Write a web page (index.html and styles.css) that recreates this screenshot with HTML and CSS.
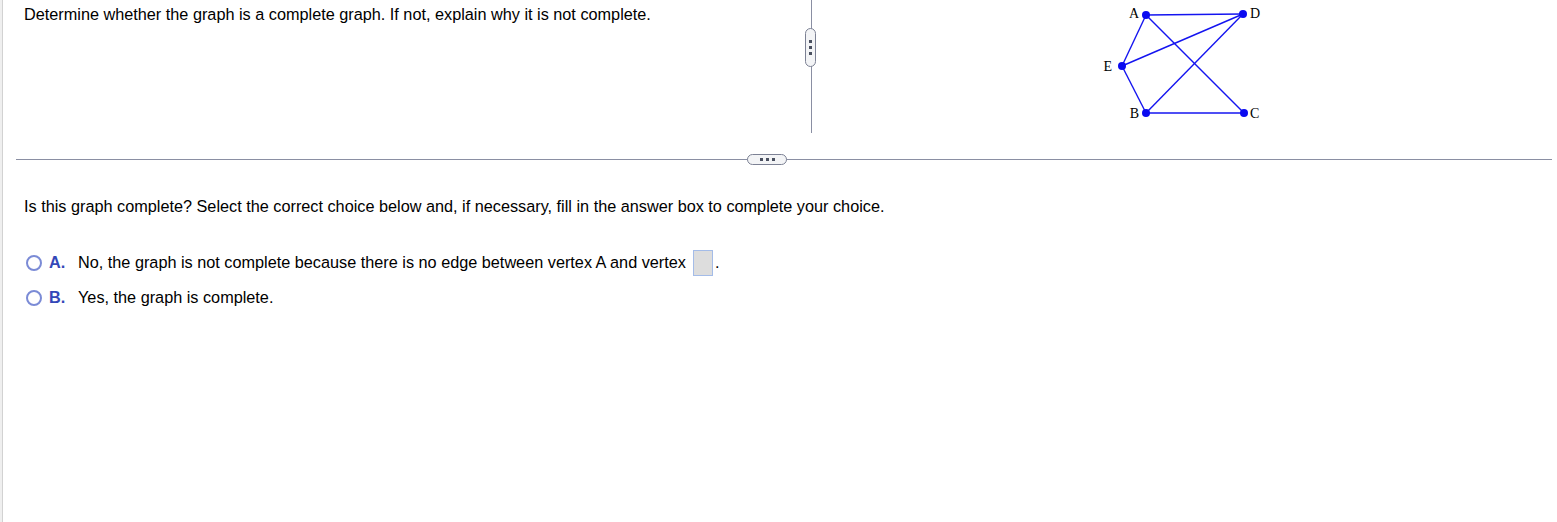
FILE: index.html
```html
<!DOCTYPE html>
<html lang="en">
  <head>
    <meta charset="UTF-8" />
    <title>Complete graph question</title>
    <link rel="stylesheet" href="styles.css">
  </head>
  <body>
    <div class="page">
      <div class="edge"></div>
      <div class="main">
        <div class="top">
          <div class="question">
            Determine whether the graph is a complete graph. If not, explain why it is not complete.
          </div>
          <div class="vsplit">
            <div class="vhandle"><span></span><span></span><span></span></div>
          </div>
          <div class="figure">
            <svg class="graph" width="170" height="125" viewBox="0 0 170 125">
              <g stroke="#1414f0" stroke-width="1.4">
                <line x1="46" y1="15" x2="143" y2="14" />
                <line x1="46" y1="15" x2="22" y2="66" />
                <line x1="46" y1="15" x2="144" y2="113" />
                <line x1="22" y1="66" x2="143" y2="14" />
                <line x1="22" y1="66" x2="46" y2="113" />
                <line x1="46" y1="113" x2="143" y2="14" />
                <line x1="46" y1="113" x2="144" y2="113" />
              </g>
              <g fill="#0a0af0">
                <circle cx="46" cy="15" r="4" />
                <circle cx="143" cy="14" r="4" />
                <circle cx="22" cy="66" r="4" />
                <circle cx="46" cy="113" r="4" />
                <circle cx="144" cy="113" r="4" />
              </g>
              <g class="labels">
                <text x="39" y="18" text-anchor="end">A</text>
                <text x="150" y="18">D</text>
                <text x="12" y="71" text-anchor="end">E</text>
                <text x="39" y="118" text-anchor="end">B</text>
                <text x="150" y="118">C</text>
              </g>
            </svg>
          </div>
        </div>

        <div class="hsplit">
          <div class="hhandle"><span></span><span></span><span></span></div>
        </div>

        <div class="answer">
          <p class="prompt">Is this graph complete? Select the correct choice below and, if necessary, fill in the answer box to complete your choice.</p>
          <div class="choice">
            <span class="radio"></span>
            <span class="letter">A.</span>
            <span class="choice-text">No, the graph is not complete because there is no edge between vertex A and vertex</span>
            <span class="blank"></span><span class="period">.</span>
          </div>
          <div class="choice">
            <span class="radio"></span>
            <span class="letter">B.</span>
            <span class="choice-text">Yes, the graph is complete.</span>
          </div>
        </div>
      </div>
    </div>
  </body>
</html>
```

FILE: styles.css
```css
body {
  margin: 0;
  font-family: Arial, "Liberation Sans", sans-serif;
  font-size: 16.25px;
  color: #000;
  background: #fff;
}

.page {
  display: flex;
  min-height: 522px;
}

.edge {
  width: 3px;
  background: #efefef;
  border-right: 1px solid #d2d2d2;
  box-sizing: border-box;
}

.main {
  flex: 1;
}

.top {
  display: flex;
  height: 133px;
}

.question {
  width: 808px;
  padding: 5px 0 0 21px;
  box-sizing: border-box;
}

.vsplit {
  width: 1px;
  background: #8a8fa3;
  position: relative;
}

.vhandle {
  position: absolute;
  top: 28px;
  left: -6px;
  width: 9px;
  height: 37px;
  border: 1px solid #7c8194;
  border-radius: 6px;
  background: #f3f4f6;
  display: flex;
  flex-direction: column;
  align-items: center;
  justify-content: center;
  gap: 3px;
}

.vhandle span,
.hhandle span {
  width: 3px;
  height: 3px;
  background: #4a5060;
}

.figure {
  flex: 1;
  display: flex;
  justify-content: center;
}

.graph {
  display: block;
}

.labels text {
  font-family: "Liberation Serif", "Times New Roman", serif;
  font-size: 14px;
  fill: #000;
}

.hsplit {
  margin: 26px 5px 0 13px;
  height: 1px;
  background: #8a8fa3;
  position: relative;
}

.hhandle {
  position: absolute;
  left: 731px;
  top: -5px;
  width: 38px;
  height: 9px;
  border: 1px solid #7c8194;
  border-radius: 6px;
  background: #f3f4f6;
  display: flex;
  align-items: center;
  justify-content: center;
  gap: 3px;
}

.answer {
  padding-left: 21px;
}

.prompt {
  margin: 37px 0 29px;
}

.choice {
  display: flex;
  align-items: center;
  height: 35px;
}

.radio {
  width: 12px;
  height: 12px;
  border: 2px solid #7b8bd6;
  border-radius: 50%;
  margin-left: 2px;
}

.letter {
  color: #3448b8;
  font-weight: bold;
  margin-left: 7px;
  width: 29px;
}

.blank {
  width: 18px;
  height: 24px;
  margin-left: 7px;
  background: #dddddd;
  border: 1px solid #a4bce8;
}

.period {
  margin-left: 2px;
}
```
